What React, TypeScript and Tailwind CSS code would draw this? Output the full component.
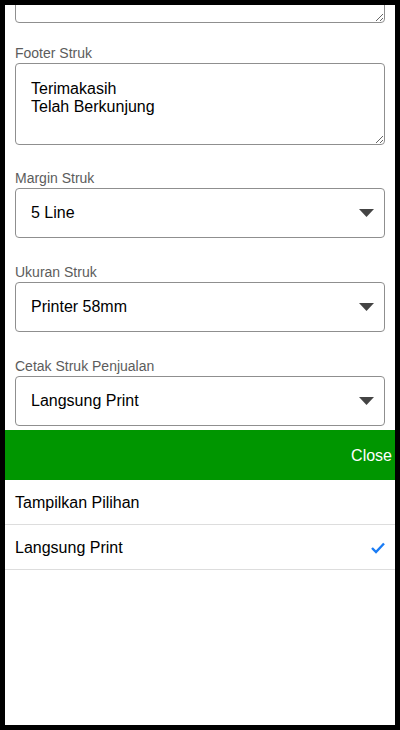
import React from "react";

const font = { fontFamily: '"Liberation Sans", Arial, sans-serif' };

function Label({ children }: { children: React.ReactNode }) {
  return <div className="text-[14px] leading-[20px] text-[#5c5c5c] pt-[3px]">{children}</div>;
}

function SelectBox({ value }: { value: string }) {
  return (
    <div className="h-[50px] border border-[#8f8f8f] rounded-[4px] flex items-center justify-between pl-[15px] pr-[10px] bg-white">
      <span className="text-[16px] text-black">{value}</span>
      <svg width="15" height="8" viewBox="0 0 15 8">
        <polygon points="0,0 15,0 7.5,8" fill="#444444" />
      </svg>
    </div>
  );
}

export default function App() {
  return (
    <div className="w-[400px] h-[730px] bg-black pt-[5px] px-[5px] pb-[5px]" style={font}>
      <div className="bg-white h-full flex flex-col overflow-hidden">
        <div className="flex-1 min-h-0 overflow-hidden px-[10px]">
          <textarea
            readOnly
            defaultValue=""
            className="block w-full h-[82px] mt-[-64px] border border-[#8f8f8f] rounded-[4px] p-[15px] text-[16px] leading-[18px] text-black outline-none"
          />
          <div className="mt-[17px]">
            <Label>Footer Struk</Label>
            <textarea
              readOnly
              defaultValue={"Terimakasih\nTelah Berkunjung"}
              className="block w-full h-[82px] border border-[#8f8f8f] rounded-[4px] px-[15px] pt-[16px] pb-[15px] text-[16px] leading-[18px] text-black outline-none"
            />
          </div>
          <div className="mt-[20px]">
            <Label>Margin Struk</Label>
            <SelectBox value="5 Line" />
          </div>
          <div className="mt-[21px]">
            <Label>Ukuran Struk</Label>
            <SelectBox value="Printer 58mm" />
          </div>
          <div className="mt-[21px]">
            <Label>Cetak Struk Penjualan</Label>
            <SelectBox value="Langsung Print" />
          </div>
        </div>
        <div className="h-[295px] shrink-0 bg-white">
          <div className="h-[50px] bg-[#009600] flex items-center justify-end pr-[3px] pt-[1px]">
            <span className="text-white text-[16px]">Close</span>
          </div>
          <div className="h-[45px] border-b border-[#dddddd] flex items-center pl-[10px] pt-[1px] text-[16px] text-black">
            Tampilkan Pilihan
          </div>
          <div className="h-[45px] border-b border-[#dddddd] flex items-center justify-between pl-[10px] pr-[10px] pt-[1px] text-[16px] text-black">
            <span>Langsung Print</span>
            <svg width="14" height="12" viewBox="0 0 14 12">
              <polyline points="1,6 5,10 13,1.5" fill="none" stroke="#1a7cf5" strokeWidth="2.4" strokeLinejoin="miter" />
            </svg>
          </div>
        </div>
      </div>
    </div>
  );
}
